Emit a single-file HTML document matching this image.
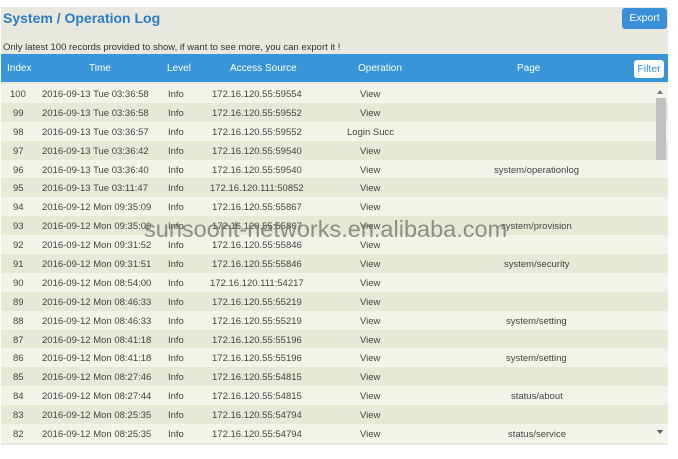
<!DOCTYPE html>
<html><head><meta charset="utf-8"><style>
body{margin:0;width:678px;height:459px;background:#fff;font-family:"Liberation Sans",Arial,sans-serif;position:relative;overflow:hidden}
.panel{position:absolute;left:1px;top:7px;width:667px;height:438px;background:#e9e8df}
h1{position:absolute;left:3px;top:10px;margin:0;font-size:14px;font-weight:bold;color:#2b7cc8}
.exp{position:absolute;left:622px;top:8px;width:45px;height:21px;background:#3a8fd8;border-radius:3px;color:#fff;font-size:10.5px;line-height:21px;text-align:center}
.note{position:absolute;left:3px;top:42px;font-size:9.5px;color:#333}
.hdr{position:absolute;left:1px;top:54px;width:667px;height:28px;background:#3795d8;color:#fff;font-size:10px}
.hdr span,.row span{position:absolute;top:0;white-space:nowrap}
.hdr span{line-height:30px}
.filt{position:absolute;left:634px;top:60px;width:30px;height:18px;background:#fff;border-radius:3px;color:#3a8fd8;font-size:10.5px;line-height:19px;text-align:center}
.rows{position:absolute;left:1px;top:84px;width:667px}
.row{position:relative;height:18.9px;font-size:9.5px;color:#444;line-height:21px}
.row:nth-child(odd){background:#f3f4e9}
.row:nth-child(even){background:#e7e9d6}
.thumb{position:absolute;left:656px;top:98px;width:10px;height:62px;background:#c1c1c1}
.wm{position:absolute;left:144px;top:216px;font-size:23.5px;color:rgba(110,110,110,.75);white-space:nowrap}
</style></head><body>
<div class="panel"></div>
<h1>System / Operation Log</h1>
<div class="exp">Export</div>
<div class="note">Only latest 100 records provided to show, if want to see more, you can export it !</div>
<div class="hdr">
<span style="left:6px">Index</span><span style="left:88px">Time</span><span style="left:166px">Level</span><span style="left:229px">Access Source</span><span style="left:357px">Operation</span><span style="left:516px">Page</span>
</div>
<div class="filt">Filter</div>
<div class="rows">
<div class="row"><span style="left:9px">100</span><span style="left:41px">2016-09-13 Tue 03:36:58</span><span style="left:167px">Info</span><span style="left:211px">172.16.120.55:59554</span><span style="left:359px">View</span></div>
<div class="row"><span style="left:12px">99</span><span style="left:41px">2016-09-13 Tue 03:36:58</span><span style="left:167px">Info</span><span style="left:211px">172.16.120.55:59552</span><span style="left:359px">View</span></div>
<div class="row"><span style="left:12px">98</span><span style="left:41px">2016-09-13 Tue 03:36:57</span><span style="left:167px">Info</span><span style="left:211px">172.16.120.55:59552</span><span style="left:346px">Login Succ</span></div>
<div class="row"><span style="left:12px">97</span><span style="left:41px">2016-09-13 Tue 03:36:42</span><span style="left:167px">Info</span><span style="left:211px">172.16.120.55:59540</span><span style="left:359px">View</span></div>
<div class="row"><span style="left:12px">96</span><span style="left:41px">2016-09-13 Tue 03:36:40</span><span style="left:167px">Info</span><span style="left:211px">172.16.120.55:59540</span><span style="left:359px">View</span><span style="left:493px">system/operationlog</span></div>
<div class="row"><span style="left:12px">95</span><span style="left:41px">2016-09-13 Tue 03:11:47</span><span style="left:167px">Info</span><span style="left:209px">172.16.120.111:50852</span><span style="left:359px">View</span></div>
<div class="row"><span style="left:12px">94</span><span style="left:41px">2016-09-12 Mon 09:35:09</span><span style="left:167px">Info</span><span style="left:211px">172.16.120.55:55867</span><span style="left:359px">View</span></div>
<div class="row"><span style="left:12px">93</span><span style="left:41px">2016-09-12 Mon 09:35:09</span><span style="left:167px">Info</span><span style="left:211px">172.16.120.55:55867</span><span style="left:359px">View</span><span style="left:500px">system/provision</span></div>
<div class="row"><span style="left:12px">92</span><span style="left:41px">2016-09-12 Mon 09:31:52</span><span style="left:167px">Info</span><span style="left:211px">172.16.120.55:55846</span><span style="left:359px">View</span></div>
<div class="row"><span style="left:12px">91</span><span style="left:41px">2016-09-12 Mon 09:31:51</span><span style="left:167px">Info</span><span style="left:211px">172.16.120.55:55846</span><span style="left:359px">View</span><span style="left:503px">system/security</span></div>
<div class="row"><span style="left:12px">90</span><span style="left:41px">2016-09-12 Mon 08:54:00</span><span style="left:167px">Info</span><span style="left:209px">172.16.120.111:54217</span><span style="left:359px">View</span></div>
<div class="row"><span style="left:12px">89</span><span style="left:41px">2016-09-12 Mon 08:46:33</span><span style="left:167px">Info</span><span style="left:211px">172.16.120.55:55219</span><span style="left:359px">View</span></div>
<div class="row"><span style="left:12px">88</span><span style="left:41px">2016-09-12 Mon 08:46:33</span><span style="left:167px">Info</span><span style="left:211px">172.16.120.55:55219</span><span style="left:359px">View</span><span style="left:505px">system/setting</span></div>
<div class="row"><span style="left:12px">87</span><span style="left:41px">2016-09-12 Mon 08:41:18</span><span style="left:167px">Info</span><span style="left:211px">172.16.120.55:55196</span><span style="left:359px">View</span></div>
<div class="row"><span style="left:12px">86</span><span style="left:41px">2016-09-12 Mon 08:41:18</span><span style="left:167px">Info</span><span style="left:211px">172.16.120.55:55196</span><span style="left:359px">View</span><span style="left:505px">system/setting</span></div>
<div class="row"><span style="left:12px">85</span><span style="left:41px">2016-09-12 Mon 08:27:46</span><span style="left:167px">Info</span><span style="left:211px">172.16.120.55:54815</span><span style="left:359px">View</span></div>
<div class="row"><span style="left:12px">84</span><span style="left:41px">2016-09-12 Mon 08:27:44</span><span style="left:167px">Info</span><span style="left:211px">172.16.120.55:54815</span><span style="left:359px">View</span><span style="left:510px">status/about</span></div>
<div class="row"><span style="left:12px">83</span><span style="left:41px">2016-09-12 Mon 08:25:35</span><span style="left:167px">Info</span><span style="left:211px">172.16.120.55:54794</span><span style="left:359px">View</span></div>
<div class="row"><span style="left:12px">82</span><span style="left:41px">2016-09-12 Mon 08:25:35</span><span style="left:167px">Info</span><span style="left:211px">172.16.120.55:54794</span><span style="left:359px">View</span><span style="left:507px">status/service</span></div>
</div>
<div class="thumb"></div>
<div style="position:absolute;left:657px;top:90px;width:0;height:0;border-left:3px solid transparent;border-right:3px solid transparent;border-bottom:4px solid #777"></div>
<div style="position:absolute;left:657px;top:430px;width:0;height:0;border-left:3px solid transparent;border-right:3px solid transparent;border-top:4px solid #555"></div>
<div class="wm">sunsoont-networks.en.alibaba.com</div>
</body></html>
